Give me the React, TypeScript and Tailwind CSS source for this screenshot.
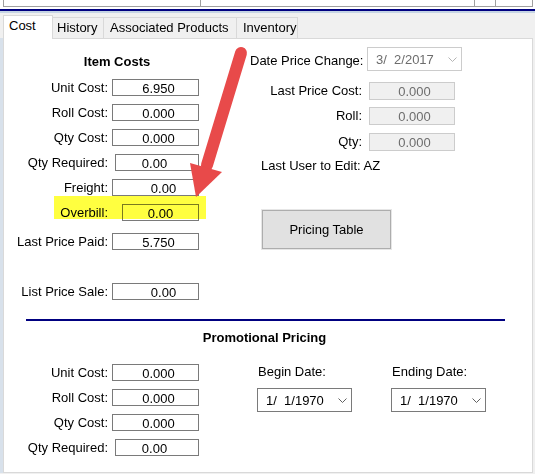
import React from 'react';

// Cost tab of the item maintenance dialog, with the highlight + arrow annotation on top.

function Chevron({ color }: { color: string }) {
  return (
    <svg width="9" height="5" viewBox="0 0 9 5" className="shrink-0">
      <polyline points="0.5,0.5 4.5,4.5 8.5,0.5" fill="none" stroke={color} strokeWidth="1" />
    </svg>
  );
}

function Field({
  label,
  value,
  boxClass,
  textClass = '',
  className = '',
}: {
  label: string;
  value: string;
  boxClass: string;
  textClass?: string;
  className?: string;
}) {
  return (
    <div className={`flex h-[17px] items-center ${className}`}>
      <div className="w-[104px] shrink-0 whitespace-nowrap text-right leading-[16px]">{label}</div>
      <div className={`flex h-[17px] shrink-0 border border-[#7a7a7a] bg-white ${boxClass}`}>
        <div className={`w-full pt-px text-center leading-[15px] ${textClass}`}>{value}</div>
      </div>
    </div>
  );
}

function ReadOnlyField({ label, value, className = '' }: { label: string; value: string; className?: string }) {
  return (
    <div className={`flex items-center ${className}`}>
      <div className="w-[112px] shrink-0 whitespace-nowrap text-right leading-[16px]">{label}</div>
      <div className="ml-[7px] flex h-[18px] w-[86px] items-center justify-center border border-[#cccccc] bg-[#f0f0f0] pl-[5px] pt-px text-[#6d6d6d]">
        {value}
      </div>
    </div>
  );
}

function DateCombo({ value, disabled }: { value: string; disabled?: boolean }) {
  return (
    <div
      className={`flex h-[24px] w-[95px] items-center border bg-white pl-[8px] pr-[4px] ${
        disabled ? 'border-[#cccccc] text-[#6d6d6d]' : 'border-[#7a7a7a] text-black'
      }`}
    >
      <span className="flex-1 whitespace-pre pt-px leading-[16px]">{value}</span>
      <Chevron color={disabled ? '#b4b4b4' : '#606060'} />
    </div>
  );
}

export default function App() {
  return (
    <div className="relative h-[474px] w-[535px] overflow-hidden bg-[#f0f0f0] font-['Liberation_Sans',Arial,sans-serif] text-[13px] text-black">
      {/* grid above (cut off) */}
      <div className="flex h-[7px] bg-white">
        <div className="ml-[3px] flex w-[530px] border-x border-b border-[#a0a0a0]">
          <div className="w-[197px] border-r border-[#a0a0a0]" />
          <div className="w-[274px] border-r border-[#a0a0a0]" />
          <div className="w-[21px] border-r border-[#a0a0a0]" />
        </div>
      </div>
      <div className="h-[2px] bg-white" />
      <div className="h-[2px] bg-[#000080]" />
      <div className="h-[2px] bg-[#c5d4e4]" />

      {/* Tabs */}
      <div className="flex h-[25px] items-end pl-[3px]">
        <div className="relative z-10 -mb-px h-[24px] w-[50px] border-x border-t border-[#d9d9d9] bg-white pl-[5px] pt-[2px] leading-[16px]">
          Cost
        </div>
        <div className="h-[21px] w-[51px] border-r border-t border-[#d9d9d9] bg-[#f0f0f0] pl-[4px] pt-[2px] leading-[16px]">
          History
        </div>
        <div className="h-[21px] w-[133px] border-r border-t border-[#d9d9d9] bg-[#f0f0f0] pl-[6px] pt-[2px] leading-[16px]">
          Associated Products
        </div>
        <div className="h-[21px] w-[61px] border-r border-t border-[#d9d9d9] bg-[#f0f0f0] pl-[6px] pt-[2px] leading-[16px]">
          Inventory
        </div>
      </div>

      {/* Panel */}
      <div className="flex">
        <div className="w-[3px] bg-[#d8e1eb]" />
        <div className="h-[435px] w-[530px] border border-[#d9d9d9] bg-white">
          <div className="flex">
            {/* Item costs */}
            <div className="w-[226px] shrink-0">
              <div className="mt-[15px] text-center font-bold leading-[16px]">Item Costs</div>
              <Field className="mt-[9px]" label="Unit Cost:" value="6.950" boxClass="ml-[4px] w-[87px]" textClass="pl-[6px]" />
              <Field className="mt-[8px]" label="Roll Cost:" value="0.000" boxClass="ml-[4px] w-[87px]" textClass="pl-[6px]" />
              <Field className="mt-[8px]" label="Qty Cost:" value="0.000" boxClass="ml-[4px] w-[87px]" textClass="pl-[6px]" />
              <Field className="mt-[8px]" label="Qty Required:" value="0.00" boxClass="ml-[7px] w-[84px]" textClass="pr-[5px]" />
              <Field className="mt-[8px]" label="Freight:" value="0.00" boxClass="ml-[4px] w-[87px]" textClass="pl-[16px]" />
              <Field className="mt-[8px]" label="Overbill:" value="0.00" boxClass="ml-[14px] w-[77px]" />
              <Field className="mt-[12px]" label="Last Price Paid:" value="5.750" boxClass="ml-[4px] w-[87px]" textClass="pl-[6px]" />
              <Field className="mt-[33px]" label="List Price Sale:" value="0.00" boxClass="ml-[4px] w-[87px]" textClass="pl-[16px]" />
            </div>

            {/* Price history */}
            <div className="ml-[20px] shrink-0">
              <div className="mt-[8px] flex items-center">
                <div className="w-[112px] shrink-0 whitespace-nowrap pt-[3px] text-right leading-[16px]">Date Price Change:</div>
                <div className="ml-[5px]">
                  <DateCombo value="3/  2/2017" disabled />
                </div>
              </div>
              <ReadOnlyField className="mt-[11px]" label="Last Price Cost:" value="0.000" />
              <ReadOnlyField className="mt-[7px]" label="Roll:" value="0.000" />
              <ReadOnlyField className="mt-[8px]" label="Qty:" value="0.000" />
              <div className="ml-[11px] mt-[7px] leading-[16px]">Last User to Edit: AZ</div>
              <button className="ml-[12px] mt-[36px] h-[39px] w-[129px] border border-[#adadad] bg-[#e1e1e1] text-[13px] shadow-[0_0_0_1px_#e6e6e6]">
                Pricing Table
              </button>
            </div>
          </div>

          <div className="ml-[22px] mt-[19px] h-[2px] w-[479px] bg-[#000080]" />
          <div className="mt-[9px] w-[521px] text-center font-bold leading-[16px]">Promotional Pricing</div>

          {/* Promotional pricing */}
          <div className="mt-[18px] flex">
            <div className="w-[226px] shrink-0">
              <Field label="Unit Cost:" value="0.000" boxClass="ml-[4px] w-[87px]" textClass="pl-[6px]" />
              <Field className="mt-[8px]" label="Roll Cost:" value="0.000" boxClass="ml-[4px] w-[87px]" textClass="pl-[6px]" />
              <Field className="mt-[8px]" label="Qty Cost:" value="0.000" boxClass="ml-[4px] w-[87px]" textClass="pl-[6px]" />
              <Field className="mt-[8px]" label="Qty Required:" value="0.00" boxClass="ml-[7px] w-[84px]" textClass="pr-[5px]" />
            </div>
            <div className="ml-[27px] shrink-0">
              <div className="pl-px leading-[16px]">Begin Date:</div>
              <div className="mt-[8px]">
                <DateCombo value="1/  1/1970" />
              </div>
            </div>
            <div className="ml-[39px] shrink-0">
              <div className="pl-px leading-[16px]">Ending Date:</div>
              <div className="mt-[8px]">
                <DateCombo value="1/  1/1970" />
              </div>
            </div>
          </div>
        </div>
      </div>

      {/* Annotation: highlighter over Overbill */}
      <div className="pointer-events-none absolute left-[54px] top-[196px] h-[23px] w-[152px] bg-[#ffff40] mix-blend-multiply" />

      {/* Annotation: red arrow */}
      <svg className="pointer-events-none absolute left-0 top-0" width="535" height="474" viewBox="0 0 535 474">
        <line x1="241" y1="53" x2="207" y2="165" stroke="#e84a4a" strokeWidth="12" strokeLinecap="round" />
        <polygon points="190,163 222,172 196,197" fill="#e84a4a" />
      </svg>
    </div>
  );
}
